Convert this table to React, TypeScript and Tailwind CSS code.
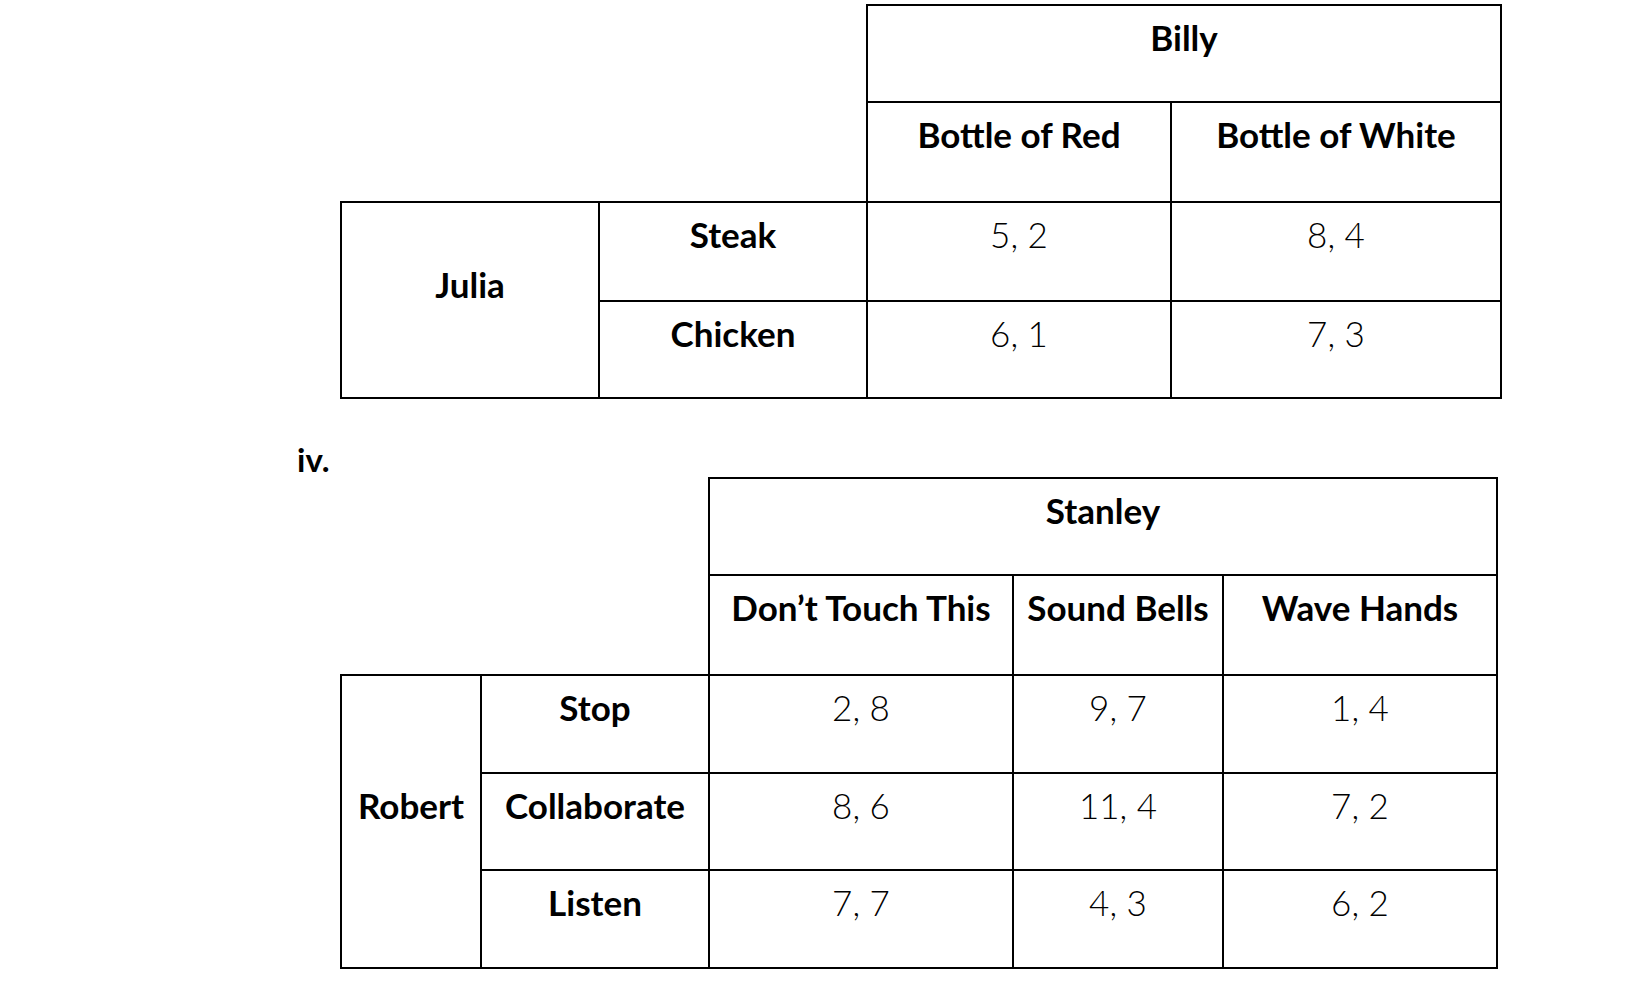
const head = 'border-2 border-black align-top pt-[10px] text-center font-bold'
const num = 'border-2 border-black align-top pt-[10px] text-center font-light'

export default function App() {
  return (
    <div className="min-h-[997px] w-[1639px] bg-white pl-[297px] pt-[4px] font-[Lato,sans-serif] text-[35px] leading-[1.2] text-black">
      <table className="ml-[43px] w-[1162px] table-fixed border-collapse">
        <colgroup>
          <col className="w-[258px]" />
          <col className="w-[268px]" />
          <col className="w-[304px]" />
          <col className="w-[330px]" />
        </colgroup>
        <tbody>
          <tr className="h-[97px]">
            <td colSpan={2} rowSpan={2} />
            <td colSpan={2} className={head}>Billy</td>
          </tr>
          <tr className="h-[100px]">
            <td className={head}>Bottle of Red</td>
            <td className={head}>Bottle of White</td>
          </tr>
          <tr className="h-[99px]">
            <td rowSpan={2} className="border-2 border-black pb-[33px] text-center align-middle font-bold">Julia</td>
            <td className={head}>Steak</td>
            <td className={num}>5, 2</td>
            <td className={num}>8, 4</td>
          </tr>
          <tr className="h-[97px]">
            <td className={head}>Chicken</td>
            <td className={num}>6, 1</td>
            <td className={num}>7, 3</td>
          </tr>
        </tbody>
      </table>

      <p className="mt-[44px] h-[34px] text-[33px] leading-[1] font-bold">iv.</p>

      <table className="ml-[43px] w-[1158px] table-fixed border-collapse">
        <colgroup>
          <col className="w-[140px]" />
          <col className="w-[228px]" />
          <col className="w-[304px]" />
          <col className="w-[210px]" />
          <col className="w-[274px]" />
        </colgroup>
        <tbody>
          <tr className="h-[97px]">
            <td colSpan={2} rowSpan={2} />
            <td colSpan={3} className={head}>Stanley</td>
          </tr>
          <tr className="h-[100px]">
            <td className={head}>Don’t Touch This</td>
            <td className={head}>Sound Bells</td>
            <td className={head}>Wave Hands</td>
          </tr>
          <tr className="h-[98px]">
            <td rowSpan={3} className="border-2 border-black pb-[34px] text-center align-middle font-bold">Robert</td>
            <td className={head}>Stop</td>
            <td className={num}>2, 8</td>
            <td className={num}>9, 7</td>
            <td className={num}>1, 4</td>
          </tr>
          <tr className="h-[97px]">
            <td className={head}>Collaborate</td>
            <td className={num}>8, 6</td>
            <td className={num}>11, 4</td>
            <td className={num}>7, 2</td>
          </tr>
          <tr className="h-[98px]">
            <td className={head}>Listen</td>
            <td className={num}>7, 7</td>
            <td className={num}>4, 3</td>
            <td className={num}>6, 2</td>
          </tr>
        </tbody>
      </table>
    </div>
  )
}
